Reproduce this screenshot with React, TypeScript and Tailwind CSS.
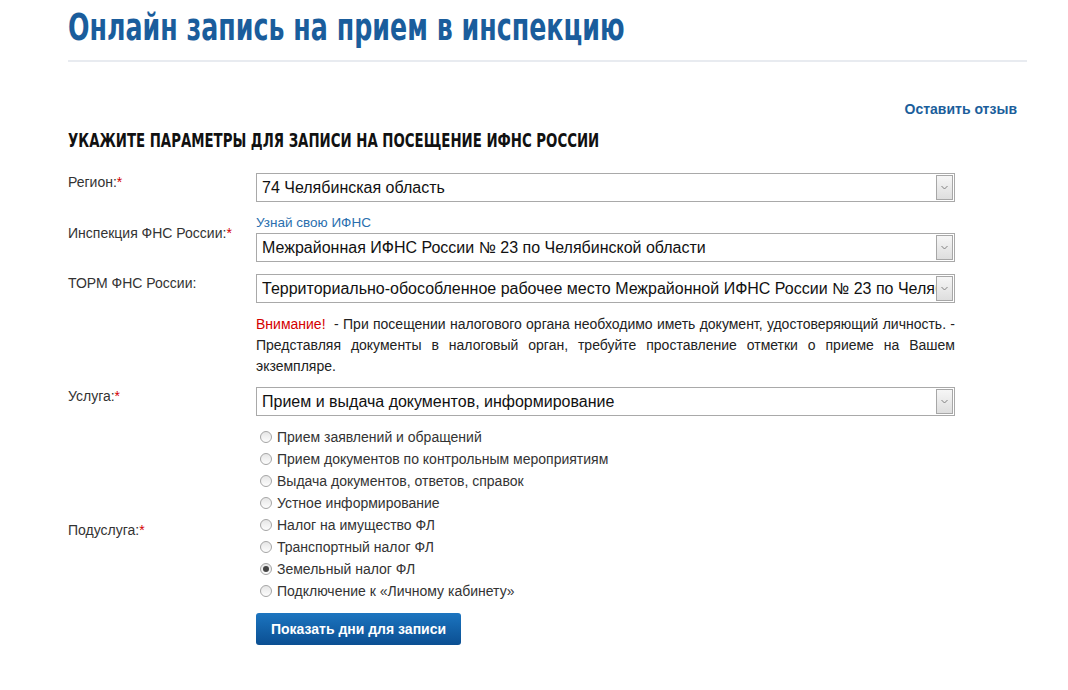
import { useState } from "react";

const SUBSERVICES = [
  "Прием заявлений и обращений",
  "Прием документов по контрольным мероприятиям",
  "Выдача документов, ответов, справок",
  "Устное информирование",
  "Налог на имущество ФЛ",
  "Транспортный налог ФЛ",
  "Земельный налог ФЛ",
  "Подключение к «Личному кабинету»",
];

function Select({ value }: { value: string }) {
  return (
    <div className="flex h-[29px] w-[699px] items-center border border-[#a9a9a9] bg-white pl-[5px] pr-[1px]">
      <span className="flex-1 overflow-hidden whitespace-nowrap text-[16px] text-[#111]">{value}</span>
      <span className="flex h-[25px] w-[17px] shrink-0 items-center justify-center border border-[#a7a7a7] bg-gradient-to-b from-[#f6f6f6] to-[#dedede]">
        <svg width="7" height="5" viewBox="0 0 7 5" fill="none">
          <path d="M0.5 1 L3.5 4 L6.5 1" stroke="#808080" strokeWidth="1" />
        </svg>
      </span>
    </div>
  );
}

function Label({ text, required, className }: { text: string; required?: boolean; className?: string }) {
  return (
    <div className={`w-[188px] shrink-0 text-[14px] leading-[16px] text-[#333] ${className ?? ""}`}>
      {text}
      {required && <span className="text-[#d40000]">*</span>}
    </div>
  );
}

export default function App() {
  const [selected, setSelected] = useState(6);

  return (
    <div className="min-h-[690px] bg-white font-['Liberation_Sans',Arial,sans-serif]">
      <div className="ml-[68px] w-[959px]">
        <h1 className="pt-[6px] text-[#1a5d9c]">
          <span className="inline-block origin-left scale-x-[0.76] whitespace-nowrap font-['DejaVu_Sans_Condensed','DejaVu_Sans',sans-serif] text-[37px] font-bold leading-[44px] [font-stretch:condensed]">
            Онлайн запись на прием в инспекцию
          </span>
        </h1>
        <div className="mt-[10px] h-[2px] bg-[#e8ebf0]" />

        <div className="mt-[37px] flex justify-end pr-[10px]">
          <a href="#" className="text-[14px] font-bold text-[#1b5e9b]">
            Оставить отзыв
          </a>
        </div>

        <h2 className="mt-[8px]">
          <span className="inline-block origin-left scale-x-[0.74] whitespace-nowrap font-['DejaVu_Sans_Condensed','DejaVu_Sans',sans-serif] text-[20px] font-semibold leading-[24px] text-[#111] [font-stretch:condensed]">
            УКАЖИТЕ ПАРАМЕТРЫ ДЛЯ ЗАПИСИ НА ПОСЕЩЕНИЕ ИФНС РОССИИ
          </span>
        </h2>

        <div className="mt-[19px] flex flex-col">
          <div className="flex">
            <Label text="Регион:" required className="pt-[1px]" />
            <Select value="74 Челябинская область" />
          </div>

          <div className="mt-[12px] flex">
            <Label text="Инспекция ФНС России:" required className="pt-[11px]" />
            <div className="flex flex-col">
              <a href="#" className="text-[13.5px] leading-[17px] text-[#2a6fae]">
                Узнай свою ИФНС
              </a>
              <div className="mt-[2px]">
                <Select value="Межрайонная ИФНС России № 23 по Челябинской области" />
              </div>
            </div>
          </div>

          <div className="mt-[12px] flex">
            <Label text="ТОРМ ФНС России:" className="pt-[1px]" />
            <Select value="Территориально-обособленное рабочее место Межрайонной ИФНС России № 23 по Челябинской области" />
          </div>

          <div className="mt-[11px] flex">
            <div className="w-[188px] shrink-0" />
            <p className="w-[699px] text-justify text-[14px] leading-[21px] text-[#222]">
              <span className="text-[#d40000]">Внимание!</span>&nbsp; - При посещении налогового органа необходимо
              иметь документ, удостоверяющий личность. - Представляя документы в налоговый орган, требуйте
              проставление отметки о приеме на Вашем экземпляре.
            </p>
          </div>

          <div className="mt-[10px] flex">
            <Label text="Услуга:" required className="pt-[1px]" />
            <Select value="Прием и выдача документов, информирование" />
          </div>

          <div className="mt-[10px] flex">
            <Label text="Подуслуга:" required className="pt-[96px]" />
            <div className="flex flex-col">
              {SUBSERVICES.map((item, i) => (
                <label key={item} className="flex h-[22px] cursor-pointer items-center text-[14px] text-[#333]">
                  <span
                    className="mr-[5px] ml-[4px] flex h-[12px] w-[12px] items-center justify-center rounded-full border border-[#a5a5a5] bg-gradient-to-b from-[#e6e6e6] to-[#fdfdfd]"
                    onClick={() => setSelected(i)}
                  >
                    {selected === i && <span className="h-[6px] w-[6px] rounded-full bg-[#444]" />}
                  </span>
                  {item}
                </label>
              ))}
            </div>
          </div>

          <div className="mt-[11px] flex">
            <div className="w-[188px] shrink-0" />
            <button className="h-[32px] w-[205px] rounded-[3px] bg-gradient-to-b from-[#1c75c0] to-[#0b4f92] text-[14px] font-bold text-white">
              Показать дни для записи
            </button>
          </div>
        </div>
      </div>
    </div>
  );
}
